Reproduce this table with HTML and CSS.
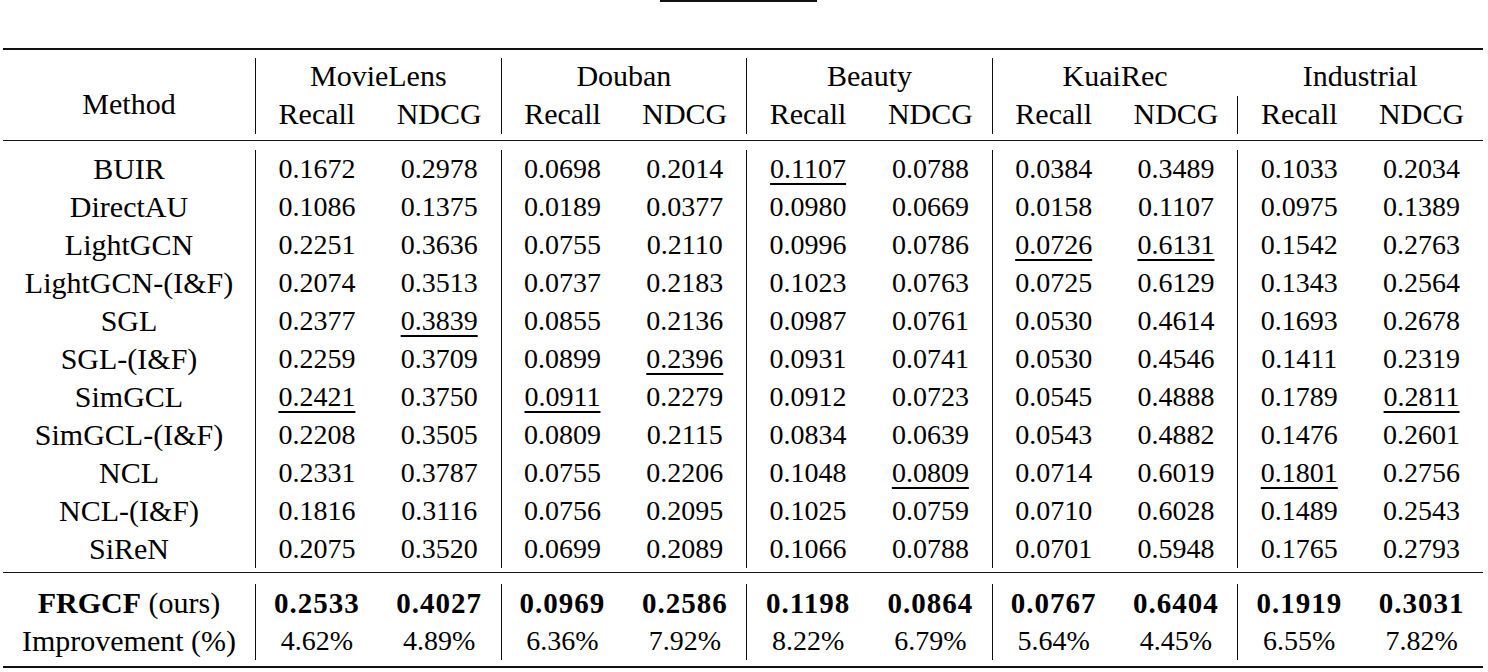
FILE: index.html
```html
<!DOCTYPE html>
<html lang="en">
<head>
<meta charset="utf-8">
<title>Results table</title>
<link rel="stylesheet" href="styles.css">
</head>
<body>
<div class="page">
  <div class="top-strip"><span class="mark"></span></div>
  <table class="results">
    <colgroup>
      <col class="c-method">
      <col span="10" class="c-val">
    </colgroup>
    <tbody>
      <tr class="rule heavy"><td colspan="11"></td></tr>
      <tr class="gap g8"><td colspan="11"></td></tr>
      <tr class="row head">
        <th rowspan="2" class="txt method-head">Method</th>
        <th colspan="2" class="txt vl">MovieLens</th>
        <th colspan="2" class="txt vl">Douban</th>
        <th colspan="2" class="txt vl">Beauty</th>
        <th colspan="2" class="txt vl">KuaiRec</th>
        <th colspan="2" class="txt">Industrial</th>
      </tr>
      <tr class="row head">
        <th class="txt vl">Recall</th><th class="txt">NDCG</th>
        <th class="txt vl">Recall</th><th class="txt">NDCG</th>
        <th class="txt vl">Recall</th><th class="txt">NDCG</th>
        <th class="txt vl">Recall</th><th class="txt">NDCG</th>
        <th class="txt vl">Recall</th><th class="txt">NDCG</th>
      </tr>
      <tr class="gap g6"><td colspan="11"></td></tr>
      <tr class="rule"><td colspan="11"></td></tr>
      <tr class="gap g9"><td colspan="11"></td></tr>

      <tr class="row"><td class="txt">BUIR</td>
        <td class="num vl">0.1672</td><td class="num">0.2978</td>
        <td class="num vl">0.0698</td><td class="num">0.2014</td>
        <td class="num vl"><span class="ul">0.1107</span></td><td class="num">0.0788</td>
        <td class="num vl">0.0384</td><td class="num">0.3489</td>
        <td class="num vl">0.1033</td><td class="num">0.2034</td></tr>
      <tr class="row"><td class="txt">DirectAU</td>
        <td class="num vl">0.1086</td><td class="num">0.1375</td>
        <td class="num vl">0.0189</td><td class="num">0.0377</td>
        <td class="num vl">0.0980</td><td class="num">0.0669</td>
        <td class="num vl">0.0158</td><td class="num">0.1107</td>
        <td class="num vl">0.0975</td><td class="num">0.1389</td></tr>
      <tr class="row"><td class="txt">LightGCN</td>
        <td class="num vl">0.2251</td><td class="num">0.3636</td>
        <td class="num vl">0.0755</td><td class="num">0.2110</td>
        <td class="num vl">0.0996</td><td class="num">0.0786</td>
        <td class="num vl"><span class="ul">0.0726</span></td><td class="num"><span class="ul">0.6131</span></td>
        <td class="num vl">0.1542</td><td class="num">0.2763</td></tr>
      <tr class="row"><td class="txt">LightGCN-(I&amp;F)</td>
        <td class="num vl">0.2074</td><td class="num">0.3513</td>
        <td class="num vl">0.0737</td><td class="num">0.2183</td>
        <td class="num vl">0.1023</td><td class="num">0.0763</td>
        <td class="num vl">0.0725</td><td class="num">0.6129</td>
        <td class="num vl">0.1343</td><td class="num">0.2564</td></tr>
      <tr class="row"><td class="txt">SGL</td>
        <td class="num vl">0.2377</td><td class="num"><span class="ul">0.3839</span></td>
        <td class="num vl">0.0855</td><td class="num">0.2136</td>
        <td class="num vl">0.0987</td><td class="num">0.0761</td>
        <td class="num vl">0.0530</td><td class="num">0.4614</td>
        <td class="num vl">0.1693</td><td class="num">0.2678</td></tr>
      <tr class="row"><td class="txt">SGL-(I&amp;F)</td>
        <td class="num vl">0.2259</td><td class="num">0.3709</td>
        <td class="num vl">0.0899</td><td class="num"><span class="ul">0.2396</span></td>
        <td class="num vl">0.0931</td><td class="num">0.0741</td>
        <td class="num vl">0.0530</td><td class="num">0.4546</td>
        <td class="num vl">0.1411</td><td class="num">0.2319</td></tr>
      <tr class="row"><td class="txt">SimGCL</td>
        <td class="num vl"><span class="ul">0.2421</span></td><td class="num">0.3750</td>
        <td class="num vl"><span class="ul">0.0911</span></td><td class="num">0.2279</td>
        <td class="num vl">0.0912</td><td class="num">0.0723</td>
        <td class="num vl">0.0545</td><td class="num">0.4888</td>
        <td class="num vl">0.1789</td><td class="num"><span class="ul">0.2811</span></td></tr>
      <tr class="row"><td class="txt">SimGCL-(I&amp;F)</td>
        <td class="num vl">0.2208</td><td class="num">0.3505</td>
        <td class="num vl">0.0809</td><td class="num">0.2115</td>
        <td class="num vl">0.0834</td><td class="num">0.0639</td>
        <td class="num vl">0.0543</td><td class="num">0.4882</td>
        <td class="num vl">0.1476</td><td class="num">0.2601</td></tr>
      <tr class="row"><td class="txt">NCL</td>
        <td class="num vl">0.2331</td><td class="num">0.3787</td>
        <td class="num vl">0.0755</td><td class="num">0.2206</td>
        <td class="num vl">0.1048</td><td class="num"><span class="ul">0.0809</span></td>
        <td class="num vl">0.0714</td><td class="num">0.6019</td>
        <td class="num vl"><span class="ul">0.1801</span></td><td class="num">0.2756</td></tr>
      <tr class="row"><td class="txt">NCL-(I&amp;F)</td>
        <td class="num vl">0.1816</td><td class="num">0.3116</td>
        <td class="num vl">0.0756</td><td class="num">0.2095</td>
        <td class="num vl">0.1025</td><td class="num">0.0759</td>
        <td class="num vl">0.0710</td><td class="num">0.6028</td>
        <td class="num vl">0.1489</td><td class="num">0.2543</td></tr>
      <tr class="row"><td class="txt">SiReN</td>
        <td class="num vl">0.2075</td><td class="num">0.3520</td>
        <td class="num vl">0.0699</td><td class="num">0.2089</td>
        <td class="num vl">0.1066</td><td class="num">0.0788</td>
        <td class="num vl">0.0701</td><td class="num">0.5948</td>
        <td class="num vl">0.1765</td><td class="num">0.2793</td></tr>

      <tr class="gap g4"><td colspan="11"></td></tr>
      <tr class="rule"><td colspan="11"></td></tr>
      <tr class="gap g11"><td colspan="11"></td></tr>

      <tr class="row"><td class="txt"><b>FRGCF</b> (ours)</td>
        <td class="num best vl">0.2533</td><td class="num best">0.4027</td>
        <td class="num best vl">0.0969</td><td class="num best">0.2586</td>
        <td class="num best vl">0.1198</td><td class="num best">0.0864</td>
        <td class="num best vl">0.0767</td><td class="num best">0.6404</td>
        <td class="num best vl">0.1919</td><td class="num best">0.3031</td></tr>
      <tr class="row"><td class="txt">Improvement (%)</td>
        <td class="num vl">4.62%</td><td class="num">4.89%</td>
        <td class="num vl">6.36%</td><td class="num">7.92%</td>
        <td class="num vl">8.22%</td><td class="num">6.79%</td>
        <td class="num vl">5.64%</td><td class="num">4.45%</td>
        <td class="num vl">6.55%</td><td class="num">7.82%</td></tr>
      <tr class="gap g6"><td colspan="11"></td></tr>
      <tr class="rule heavy"><td colspan="11"></td></tr>
    </tbody>
  </table>
</div>
</body>
</html>
```
FILE: styles.css
```css
html, body {
  margin: 0;
  background: #ffffff;
}

body {
  color: #000000;
  font-family: "Liberation Serif", "Times New Roman", serif;
}

.page {
  padding-left: 3px;
}

.top-strip {
  height: 48px;
  display: flex;
  align-items: flex-start;
  padding-left: 657px;
}

.top-strip .mark {
  width: 157px;
  height: 2px;
  background: #111111;
}

.results {
  width: 1480px;
  border-collapse: separate;
  border-spacing: 0;
  table-layout: fixed;
}

.c-method {
  width: 252px;
}

.results th,
.results td {
  padding: 0;
  text-align: center;
  vertical-align: middle;
  font-weight: normal;
  white-space: nowrap;
}

.results tr.row > th,
.results tr.row > td {
  height: 38px;
  line-height: 32px;
}

.results tr.head > th {
  padding-bottom: 3px;
  height: 35px;
}

.txt {
  font-size: 30px;
}

.txt b {
  font-weight: bold;
}

.num {
  font-size: 28px;
}

.num.best {
  font-weight: bold;
  font-size: 29px;
  letter-spacing: 1px;
}

.vl {
  border-left: 1px solid #111111;
}

.results tr.head > th.method-head {
  padding-top: 16px;
  padding-bottom: 0;
}

.rule > td {
  height: 0;
  border-top: 1px solid #111111;
}

.rule.heavy > td {
  border-top-width: 2px;
}

.gap.g4 > td { height: 4px; }
.gap.g6 > td { height: 6px; }
.gap.g8 > td { height: 8px; }
.gap.g9 > td { height: 9px; }
.gap.g11 > td { height: 11px; }

.ul {
  text-decoration: underline;
  text-decoration-thickness: 1.5px;
  text-underline-offset: 5px;
}
```
